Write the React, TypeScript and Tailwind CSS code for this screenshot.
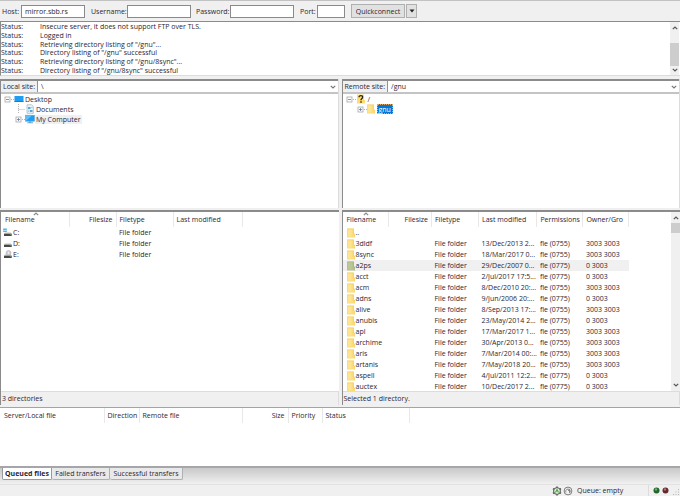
import React from 'react';

type Column = { label: string; width: string; right?: boolean; sorted?: boolean };

const messages = [
  'Insecure server, it does not support FTP over TLS.',
  'Logged in',
  'Retrieving directory listing of "/gnu"...',
  'Directory listing of "/gnu" successful',
  'Retrieving directory listing of "/gnu/8sync"...',
  'Directory listing of "/gnu/8sync" successful',
];

const localColumns: Column[] = [
  { label: 'Filename', width: 'w-[68px]', sorted: true },
  { label: 'Filesize', width: 'w-[47px]', right: true },
  { label: 'Filetype', width: 'w-[57px]' },
  { label: 'Last modified', width: 'w-[69px]' },
];

const remoteColumns: Column[] = [
  { label: 'Filename', width: 'w-[46px]', sorted: true },
  { label: 'Filesize', width: 'w-[43px]', right: true },
  { label: 'Filetype', width: 'w-[47px]' },
  { label: 'Last modified', width: 'w-[57px]' },
  { label: 'Permissions', width: 'w-[46px]' },
  { label: 'Owner/Gro', width: 'w-[46px]' },
];

const queueColumns: Column[] = [
  { label: 'Server/Local file', width: 'w-[104px]' },
  { label: 'Direction', width: 'w-[35px]' },
  { label: 'Remote file', width: 'w-[103px]' },
  { label: 'Size', width: 'w-[46px]', right: true },
  { label: 'Priority', width: 'w-[34px]' },
  { label: 'Status', width: 'w-[87px]' },
];

const remoteFiles: string[][] = [
  ['..', '', '', ''],
  ['3dldf', '13/Dec/2013 2...', 'fle (0755)', '3003 3003'],
  ['8sync', '18/Mar/2017 0...', 'fle (0755)', '3003 3003'],
  ['a2ps', '29/Dec/2007 0...', 'fle (0775)', '0 3003'],
  ['acct', '2/Jul/2017 17:5...', 'fle (0775)', '0 3003'],
  ['acm', '8/Dec/2010 20:...', 'fle (0755)', '3003 3003'],
  ['adns', '9/Jun/2006 20:...', 'fle (0775)', '0 3003'],
  ['alive', '8/Sep/2013 17:...', 'fle (0755)', '3003 3003'],
  ['anubis', '23/May/2014 2...', 'fle (0775)', '0 3003'],
  ['apl', '17/Mar/2017 1...', 'fle (0755)', '3003 3003'],
  ['archime', '30/Apr/2013 0...', 'fle (0755)', '3003 3003'],
  ['aris', '7/Mar/2014 00:...', 'fle (0755)', '3003 3003'],
  ['artanis', '7/May/2018 20...', 'fle (0755)', '3003 3003'],
  ['aspell', '4/Jul/2011 12:2...', 'fle (0775)', '0 3003'],
  ['auctex', '10/Dec/2017 2...', 'fle (0775)', '0 3003'],
];

function Chevron({ up = false, className = '' }: { up?: boolean; className?: string }) {
  return (
    <svg viewBox="0 0 6 4" className={`h-1 w-1.5 ${className}`} fill="none" stroke="currentColor" strokeWidth="1.2">
      <path d={up ? 'M.8 3.2 3 1l2.2 2.2' : 'M.8.8 3 3 5.200.8'} />
    </svg>
  );
}

function Folder({ selected = false }: { selected?: boolean }) {
  return (
    <svg viewBox="0 0 8 10" className="h-2.5 w-2 shrink-0">
      <path d="M0 .5h7V6h1v3.500H0z" fill={selected ? '#b5c08f' : '#fbdc7d'} />
      <path d="M.5 1h6v5H8v3.500" fill="none" stroke={selected ? '#a3b184' : '#f3cd61'} strokeWidth=".6" />
      <path d="M1 1.500h3.500v7H1z" fill={selected ? '#bfc99c' : '#ffe798'} opacity=".7" />
    </svg>
  );
}

function Expander({ open = false }: { open?: boolean }) {
  return (
    <svg viewBox="0 0 10 10" className="h-2.5 w-2.5 shrink-0">
      <path d="M7 5.500h3" stroke="#b5b5b5" strokeDasharray="1 1" />
      <rect x="1" y="3" width="5" height="5" fill="#fff" stroke="#a6a6a6" strokeWidth=".8" />
      <path d={open ? 'M2 5.500h3' : 'M2 5.500h3M3.500 4v3'} stroke="#6d7a98" strokeWidth=".8" />
    </svg>
  );
}

function Desktop() {
  return (
    <svg viewBox="0 0 10 10" className="h-2.5 w-2.5 shrink-0">
      <path d="M.5 2h9v6h-9z" fill="#1e9df2" />
      <path d="M.5 7.300h9V8h-9z" fill="#1073bd" />
    </svg>
  );
}

function Documents() {
  return (
    <svg viewBox="0 0 10 10" className="h-2.5 w-2.5 shrink-0">
      <path d="M2 .8h4.500L8.300 2.500v6.800H2z" fill="#eef6fb" stroke="#93b3c6" strokeWidth=".7" />
      <path d="M3 3h2.500v2H3zM5 6h2.500v2H5z" fill="#5aa6d6" />
      <path d="M6 3.500h1.500M3 6.200h1.500M3 7.500h1.500" stroke="#86aec5" strokeWidth=".6" />
    </svg>
  );
}

function Computer() {
  return (
    <svg viewBox="0 0 10 10" className="h-2.5 w-2.5 shrink-0">
      <rect x=".5" y="1.200" width="9" height="6" fill="#1e9df2" stroke="#6fa3c4" strokeWidth=".6" />
      <path d="M1 6.700 7 1.600H1z" fill="#5cc0fa" />
      <path d="M4 7.300h2.200v1H8v.9H2.300v-.9H4z" fill="#67a9d0" />
    </svg>
  );
}

function Drive({ kind }: { kind: string }) {
  return (
    <svg viewBox="0 0 9 9" className="h-[9px] w-[9px] shrink-0">
      {kind === 'C:' && <path d="M.3.500h1.500V2H.3zM2.200.500h1.500V2H2.200zM.3 2.400h1.500v1.500H.3zM2.200 2.400h1.500v1.500H2.200z" fill="#24a6ed" />}
      {kind === 'E:' && <g><circle cx="5.500" cy="3" r="2.500" fill="#d2d2d2" stroke="#a5a5a5" strokeWidth=".5" /><circle cx="5.500" cy="3" r=".7" fill="#fff" /></g>}
      <path d="m2 4.500-1 1.300h7.700l-1-1.300z" fill="#c3c3c3" />
      <path d="M1 5.700h7.700V8H1z" fill="#484848" />
      <path d="M6.800 6.500h1v.6h-1z" fill="#8bd38a" />
    </svg>
  );
}

function UnknownFolder() {
  return (
    <svg viewBox="0 0 10 10" className="h-2.5 w-2.5 shrink-0">
      <path d="M1 .5h7V6h1v3.500H1z" fill="#ffdc70" />
      <path d="M3 3.300C3 .9 7 1 6.600 3.500 6.400 4.700 5 4.600 5 6.300M5 7.300v1.400" fill="none" stroke="#22201c" strokeWidth="1.300" />
    </svg>
  );
}

function HeadRow({ columns }: { columns: Column[] }) {
  return (
    <thead>
      <tr className="h-[15px]">
        {columns.map((c) => (
          <th key={c.label} scope="col" className={`relative border-r border-[#e8e8e8] p-0 font-normal ${c.width} ${c.right ? 'pr-[3px] text-right' : 'pl-[3px] text-left first:pl-1'}`}>
            {c.sorted && <Chevron up className="absolute top-0 left-1/2 -ml-0.5 text-[#8a8a8a]" />}
            {c.label}
          </th>
        ))}
        <th aria-hidden="true" className="p-0" />
      </tr>
    </thead>
  );
}

function Scrollbar({ thumb }: { thumb: string }) {
  return (
    <div className="flex w-[9px] shrink-0 flex-col items-center bg-[#f0f0f0] py-0.5 text-[#555]">
      <Chevron up className="my-0.5 shrink-0" />
      <div className={`flex w-full flex-1 flex-col ${thumb}`} />
      <Chevron className="my-0.5 shrink-0" />
    </div>
  );
}

function SiteBar({ id, label, value }: { id: string; label: string; value: string }) {
  return (
    <div className="flex h-[15px] shrink-0 border-t-2 border-b-2 border-t-[#8b8b8b] border-b-[#c4c4c4] bg-white">
      <label htmlFor={id} className="flex items-center border-r border-[#929292] bg-[#f0f0f0] px-0.5">{label}</label>
      <div className="relative flex-1">
        <select id={id} className="block h-full w-full appearance-none bg-white pl-[3px] outline-none">
          <option>{value}</option>
        </select>
        <Chevron className="pointer-events-none absolute top-1 right-0.5 text-[#777]" />
      </div>
    </div>
  );
}

function Field({ id, label, width, value = '', type = 'text' }: { id: string; label: string; width: string; value?: string; type?: string }) {
  return (
    <div className="flex items-center justify-between">
      <label htmlFor={id}>{label}</label>
      <input id={id} type={type} defaultValue={value} className={`h-[13px] border border-[#8a8a8a] bg-white px-[3px] outline-none ${width}`} />
    </div>
  );
}

function Pane({ children, footer }: { children: React.ReactNode; footer: string }) {
  return (
    <div className="flex min-h-0 flex-1 flex-col border-t-2 border-l border-[#8b8b8b]">
      <div className="flex min-h-0 flex-1 overflow-hidden bg-white">{children}</div>
      <div className="flex h-[14px] shrink-0 items-center border-t border-r border-[#dcdcdc] pl-px">{footer}</div>
    </div>
  );
}

export default function App() {
  return (
    <div className="flex h-screen min-w-[640px] flex-col overflow-hidden bg-[#f0f0f0] font-['Open_Sans','Noto_Sans',sans-serif] text-[7px] leading-[9px] whitespace-nowrap text-[#2c2630]">
      <form className="flex h-[21px] shrink-0 items-center gap-1.5 border-t border-[#c2c2c2] pl-0.5" onSubmit={(e) => e.preventDefault()}>
        <div className="w-[83px]"><Field id="host" label="Host:" width="w-16" value="mirror.sbb.rs" /></div>
        <div className="w-[99px]"><Field id="user" label="Username:" width="w-16" /></div>
        <div className="w-[98px]"><Field id="pass" label="Password:" width="w-16" type="password" /></div>
        <div className="w-[45px]"><Field id="port" label="Port:" width="w-7" /></div>
        <div className="flex gap-px">
          <button type="submit" className="h-[14px] w-[54px] border border-[#b0b0b0] bg-[#e1e1e1]">Quickconnect</button>
          <button type="button" aria-label="Recent servers" className="flex h-[14px] w-[11px] items-center justify-center border border-[#b0b0b0] bg-[#e1e1e1]">
            <svg viewBox="0 0 6 4" className="h-1 w-1.5"><path d="M.5.500h5L3 3.500z" fill="#222" /></svg>
          </button>
        </div>
      </form>

      <section className="flex h-[55px] shrink-0 border-t border-b border-l border-t-[#8b8b8b] border-b-[#dcdcdc] border-l-[#8b8b8b] bg-white pr-px">
        <div className="flex min-w-0 flex-1 flex-col justify-end leading-[8px]">
          <div className="flex h-[52px] shrink-0 flex-col">
            {messages.map((m) => (
              <div key={m} className="flex flex-1 items-center">
                <span className="w-[39px]">Status:</span>
                <span>{m}</span>
              </div>
            ))}
          </div>
        </div>
        <Scrollbar thumb="pt-[11px] after:h-[23px] after:bg-[#cdcdcd]" />
      </section>

      <main className="mt-[3px] grid min-h-0 flex-1 grid-cols-2 gap-[3px]">
        <section className="flex min-h-0 min-w-0 flex-col">
          <div className="flex h-[129px] shrink-0 flex-col border-r border-l border-r-[#dcdcdc] border-l-[#8b8b8b] bg-white">
            <SiteBar id="local" label="Local site:" value="\" />
            <ul className="pl-[3px]">
              <li className="flex h-2.5 items-center"><Expander open /><Desktop /><span className="pl-px">Desktop</span></li>
              <li className="ml-[11px] flex h-2.5 items-center">
                <svg viewBox="0 0 10 10" className="h-2.5 w-2.5 shrink-0"><path d="M3.500 0v10M3.500 5.500H10" fill="none" stroke="#b5b5b5" strokeDasharray="1 1" /></svg>
                <Documents /><span className="pl-px">Documents</span>
              </li>
              <li className="ml-[11px] flex h-2.5 items-center"><Expander /><Computer /><span className="bg-[#f0f0f0] px-px">My Computer</span></li>
            </ul>
          </div>
          <div className="mt-[2px] flex min-h-0 flex-1 flex-col">
            <Pane footer="3 directories">
              <table className="w-full table-fixed self-start border-collapse">
                <HeadRow columns={localColumns} />
                <tbody>
                  {['C:', 'D:', 'E:'].map((d) => (
                    <tr key={d} className="h-[11px]">
                      <td className="p-0 pl-0.5"><div className="flex items-center gap-px"><Drive kind={d} />{d}</div></td>
                      <td />
                      <td className="p-0 pl-[3px]">File folder</td>
                      <td /><td />
                    </tr>
                  ))}
                </tbody>
              </table>
            </Pane>
          </div>
        </section>

        <section className="flex min-h-0 min-w-0 flex-col">
          <div className="flex h-[129px] shrink-0 flex-col border-r border-l border-r-[#dcdcdc] border-l-[#8b8b8b] bg-white">
            <SiteBar id="remote" label="Remote site:" value="/gnu" />
            <ul className="pl-[3px]">
              <li className="flex h-2.5 items-center"><Expander open /><UnknownFolder /><span className="pl-0.5">/</span></li>
              <li className="ml-[11px] flex h-2.5 items-center"><Expander /><Folder /><span className="ml-0.5 flex h-2.5 items-center border border-dotted border-[#dca96a] bg-[#0078d7] px-px text-white">gnu</span></li>
            </ul>
          </div>
          <div className="mt-[2px] flex min-h-0 flex-1 flex-col">
            <Pane footer="Selected 1 directory.">
              <table className="min-w-0 flex-1 table-fixed self-start border-collapse">
                <HeadRow columns={remoteColumns} />
                <tbody>
                  {remoteFiles.map(([name, date, perm, owner]) => (
                    <tr key={name} className="h-[11px]">
                      {[
                        <div key="n" className="flex items-center gap-px"><Folder selected={name === 'a2ps'} />{name}</div>,
                        '', date && 'File folder', date, perm, owner,
                      ].map((cell, i) => (
                        <td key={i} className={`p-0 pl-[3px] first:pl-1 ${name === 'a2ps' ? 'bg-[#f0f0f0]' : ''}`}>{cell}</td>
                      ))}
                      <td />
                    </tr>
                  ))}
                </tbody>
              </table>
              <Scrollbar thumb="pt-px after:h-[10px] after:bg-[#cdcdcd]" />
            </Pane>
          </div>
        </section>
      </main>

      <section className="mt-[2px] h-[61px] shrink-0 border-t border-b-2 border-t-[#a3a3ad] border-b-[#a6a6aa] bg-white">
        <table className="w-full table-fixed border-collapse">
          <HeadRow columns={queueColumns} />
        </table>
      </section>

      <nav className="flex h-4 shrink-0 items-start bg-linear-to-b from-[#c9c9c9] to-[#f0f0f0] pl-0.5">
        <button type="button" className="h-3 w-[50px] rounded-b-xs border-x border-b border-[#9a9a9a] bg-white font-bold">Queued files</button>
        <button type="button" className="h-3 w-[58px] rounded-b-xs border-r border-b border-[#b0b0b0] bg-[#e9e9e9]">Failed transfers</button>
        <button type="button" className="h-3 w-[73px] rounded-b-xs border-r border-b border-[#b0b0b0] bg-[#e9e9e9]">Successful transfers</button>
      </nav>

      <footer className="flex h-3 shrink-0 items-center justify-end border-t border-[#e2e2e2]">
        <svg viewBox="0 0 10 10" className="h-2.5 w-2.5">
          <path d="M5 .5v1M5 8.500v1M1 2.700l1 .6M8 6.700l1 .6M1 7.300l1-.6M8 3.300l1-.6" stroke="#4b4b4b" strokeWidth="1.500" />
          <circle cx="5" cy="5" r="3.400" fill="#e9f4e5" stroke="#4b4b4b" />
          <path d="m3.500 6.500 1.500-3 1.500 3" fill="none" stroke="#43ac37" strokeWidth="1.200" />
        </svg>
        <svg viewBox="0 0 10 10" className="ml-px h-2.5 w-2.5">
          <circle cx="5" cy="5" r="3.900" fill="#f2f2f2" stroke="#7c7c7c" />
          <path d="M3 6.500a2.300 2.300 0 1 1 4 0M5 5l1.500-1.500V7" fill="none" stroke="#707070" strokeWidth=".8" />
        </svg>
        <span className="w-[75px] pl-1">Queue: empty</span>
        <div className="flex h-full w-8 items-center border-l border-[#dcdcdc] pl-1">
          <svg viewBox="0 0 16 7" className="h-[7px] w-4 shrink-0">
            <circle cx="3.500" cy="3.500" r="3" fill="#23652b" /><circle cx="3" cy="2.400" r="1.200" fill="#6bb36e" />
            <circle cx="12.500" cy="3.500" r="3" fill="#63292d" /><circle cx="12" cy="2.400" r="1.200" fill="#ad7577" />
          </svg>
          <svg viewBox="0 0 7 7" className="ml-auto h-[7px] w-[7px] self-end" fill="#b5b5b5">
            <path d="M5 0h1v1H5zM5 2.500h1v1H5zM5 5h1v1H5zM2.500 2.500h1v1h-1zM2.500 5h1v1h-1zM0 5h1v1H0z" />
          </svg>
        </div>
      </footer>
    </div>
  );
}
